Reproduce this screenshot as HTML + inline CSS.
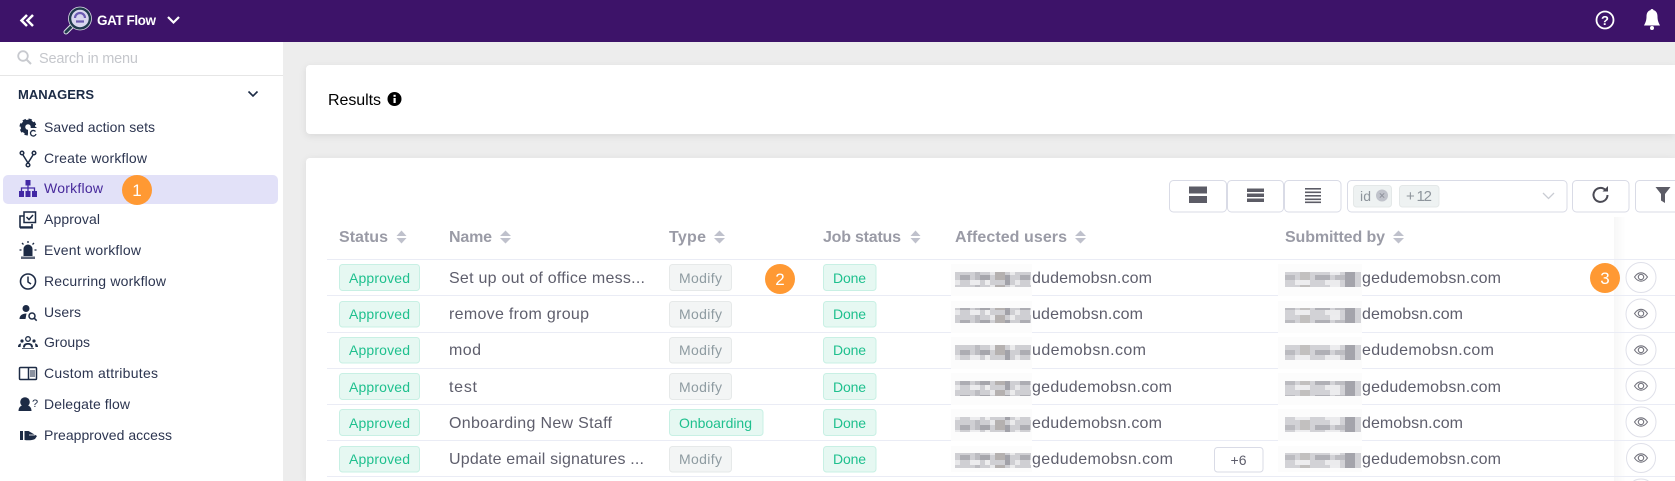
<!DOCTYPE html>
<html lang="en"><head><meta charset="utf-8"><title>GAT Flow</title>
<style>
html,body{margin:0;padding:0;width:1675px;height:481px;overflow:hidden;background:#ededed}
.b{position:absolute}
svg{position:absolute;left:0;top:0;display:block}
text{font-family:"Liberation Sans",sans-serif}
.si{font-size:14px;fill:#2c3550}
.h{font-size:16px;font-weight:bold;fill:#9a9ba6}
.t{font-size:16px;fill:#5e5e6c}
.ap{font-size:14px;fill:#1fc08e}
.mo{font-size:14px;fill:#8e9ba1}
.g{fill:#e6f8f2;stroke:#c8f0e4}
.m{fill:#f3f5f5;stroke:#e6e9e9}
.btn{fill:#fff;stroke:#d9dbe6}
.eye{fill:#fff;stroke:#dfe0e9}
.ln{stroke:#eaecf5;stroke-width:1}
.n{font-size:17px;fill:#fff;text-anchor:middle}
.ic{fill:#1d2b45}
.st{fill:none;stroke:#1d2b45}
.so{fill:#bfc1cc}
</style></head>
<body>
<div class="b" style="left:0;top:42px;width:283px;height:439px;background:#fff"></div>
<div class="b" style="left:306px;top:65px;width:1369px;height:69px;background:#fff;border-radius:4px 0 0 4px;box-shadow:0 2px 8px rgba(0,0,0,.09)"></div>
<div class="b" style="left:306px;top:158px;width:1369px;height:323px;background:#fff;border-radius:4px 0 0 0;box-shadow:0 1px 8px rgba(0,0,0,.07)"></div>
<svg width="1675" height="481" viewBox="0 0 1675 481" xmlns="http://www.w3.org/2000/svg">
<defs>
<pattern id="m1" width="60" height="15" patternUnits="userSpaceOnUse" x="955" y="0">
<rect width="60" height="15" fill="#cfcfd3"/>
<rect x="5" y="5" width="10" height="5" fill="#adadb3"/><rect x="20" y="0" width="5" height="10" fill="#bcbcc1"/>
<rect x="25" y="5" width="10" height="5" fill="#a6a6ac"/><rect x="40" y="0" width="10" height="10" fill="#b5b1b0"/>
<rect x="50" y="5" width="5" height="10" fill="#a2a2a9"/><rect x="0" y="10" width="5" height="5" fill="#e8e8ea"/>
<rect x="15" y="10" width="10" height="5" fill="#ececee"/><rect x="35" y="0" width="5" height="5" fill="#e8e8ea"/>
<rect x="55" y="0" width="5" height="5" fill="#ebebec"/><rect x="30" y="10" width="5" height="5" fill="#eeeeef"/>
</pattern>
<pattern id="m2" width="76" height="15" patternUnits="userSpaceOnUse" x="1285" y="0">
<rect width="76" height="15" fill="#d2d2d6"/>
<rect x="0" y="5" width="10" height="5" fill="#bbbbc0"/><rect x="15" y="0" width="10" height="10" fill="#c2c0bf"/>
<rect x="30" y="5" width="15" height="5" fill="#b0b0b6"/><rect x="50" y="5" width="10" height="5" fill="#bdbdc2"/>
<rect x="60" y="0" width="10" height="15" fill="#a4a4ab"/><rect x="10" y="10" width="15" height="5" fill="#ededef"/>
<rect x="40" y="10" width="15" height="5" fill="#ebebed"/><rect x="45" y="0" width="10" height="5" fill="#ececee"/>
</pattern>
<linearGradient id="sh" x1="0" x2="1"><stop offset="0" stop-color="#f7f7f7"/><stop offset="1" stop-color="#fff"/></linearGradient>
</defs>

<!-- top bar -->
<rect width="1675" height="42" fill="#3d1369"/>
<path d="M27 15l-5.500 5.500 5.500 5.500M33 15l-5.500 5.500 5.500 5.500" fill="none" stroke="#fff" stroke-width="2.500"/>
<path d="M72 26l-6 6" stroke="#dcdde6" stroke-width="5" stroke-linecap="round"/>
<path d="M72 26l-6 6" stroke="#1f3a4c" stroke-width="3" stroke-linecap="round"/>
<circle cx="80" cy="18.500" r="10" fill="#d8d6ee" stroke="#1f3a4c" stroke-width="2.500"/>
<circle cx="80" cy="18.500" r="11.500" fill="none" stroke="#dcdde6" stroke-width=".8"/>
<path d="M75 18a5 5 0 0 1 10 0M76 21.500h8" fill="none" stroke="#6a5ab0" stroke-width="2.200"/>
<text x="97" y="25" font-size="13.500" font-weight="bold" fill="#fff" textLength="59">GAT Flow</text>
<path d="M168 17l5.500 5.500 5.500-5.500" fill="none" stroke="#fff" stroke-width="2.200"/>
<circle cx="1605" cy="20" r="8.500" fill="none" stroke="#fff" stroke-width="1.800"/>
<text x="1605" y="25" font-size="13" font-weight="bold" fill="#fff" text-anchor="middle">?</text>
<path d="M1652 10c-4 0-5.500 3-5.500 6.500 0 4-1 6-2.500 9h16c-1.500-3-2.500-5-2.500-9 0-3.500-1.500-6.500-5.500-6.500z" fill="#fff"/>
<circle cx="1652" cy="28" r="2" fill="#fff"/><circle cx="1652" cy="10.500" r="1.500" fill="#fff"/>

<!-- sidebar -->
<circle cx="23" cy="56" r="4.800" fill="none" stroke="#c8cacf" stroke-width="1.800"/><path d="M26.500 59.500l4.500 4.500" stroke="#c8cacf" stroke-width="2"/>
<text x="39" y="63" font-size="14.500" fill="#c5c7cc" textLength="99">Search in menu</text>
<rect x="0" y="75" width="283" height="1" fill="#e6e6e6"/>
<text x="18" y="99" font-size="13" font-weight="bold" fill="#1c2b45" textLength="76">MANAGERS</text>
<path d="M248.500 91.500l4.500 4.500 4.500-4.500" fill="none" stroke="#1c2b45" stroke-width="1.600"/>
<rect x="3" y="175" width="275" height="29" rx="5" fill="#e2e1f8"/>

<!-- gear -->
<circle cx="28" cy="127" r="5" fill="none" stroke="#1d2b45" stroke-width="4.500"/>
<circle cx="28" cy="127" r="7.200" fill="none" stroke="#1d2b45" stroke-width="2.600" stroke-dasharray="3.200 2.500"/>
<rect x="28" y="128" width="9" height="9" fill="#fff"/>
<path d="M35.500 131.500a2.800 2.800 0 1 0 .5 2.500" fill="none" stroke="#1d2b45" stroke-width="1.300"/>
<!-- fork -->
<circle cx="22" cy="153" r="1.800" class="st" stroke-width="1.500"/><circle cx="34" cy="153" r="1.800" class="st" stroke-width="1.500"/><circle cx="28" cy="165" r="1.800" class="st" stroke-width="1.500"/>
<path d="M23 155l5 8M33 155l-5 8" class="st" stroke-width="1.500"/>
<!-- sitemap -->
<g fill="#4228a4"><rect x="25.500" y="180" width="5" height="5.500"/><rect x="19" y="191" width="5" height="6"/><rect x="25.500" y="191" width="5" height="6"/><rect x="32" y="191" width="5" height="6"/></g>
<path d="M28 185v6M21.500 191v-3h13v3" fill="none" stroke="#4228a4" stroke-width="1.300"/>
<!-- approval -->
<path d="M24 216h-4v11h12v-3" class="st" stroke-width="1.600"/><path d="M20 228h13" class="st" stroke-width="1.200"/>
<rect x="24" y="212" width="11.500" height="10.500" class="st" stroke-width="1.500"/>
<path d="M26.500 217l2.500 2.500 4-4.500" class="st" stroke-width="1.500"/>
<!-- siren -->
<path d="M23.500 256v-7a4.500 4.500 0 0 1 9 0v7z" class="ic"/><rect x="21" y="256.500" width="14" height="2.500" fill="#5b6478"/>
<path d="M19.500 250h2M34.500 250h2M22 243l1.500 1.500M34 243l-1.500 1.500M28 241v2" stroke="#1d2b45" stroke-width="1.300"/>
<!-- clock -->
<circle cx="28" cy="281.500" r="7.500" class="st" stroke-width="1.600"/><path d="M28 276.500v5.500l3 2" class="st" stroke-width="1.500"/>
<!-- users -->
<circle cx="26" cy="308.500" r="3.500" class="ic"/><path d="M19.500 319c0-3 2-5.500 7-5.500l-1 5.500z" class="ic"/>
<circle cx="32" cy="316" r="3" class="st" stroke-width="1.500"/><path d="M34.200 318.200l2.500 2.500" class="st" stroke-width="1.500"/>
<!-- groups -->
<circle cx="28" cy="339" r="2.300" class="st" stroke-width="1.300"/><circle cx="22" cy="341" r="1.600" class="ic"/><circle cx="34" cy="341" r="1.600" class="ic"/>
<path d="M23 347.500c0-3.500 2-4.500 5-4.500s5 1 5 4.500h-2c0-2-1-2.800-3-2.800s-3 .8-3 2.800zM18 347c0-2.500 1.500-3.500 3-3.500l-.5 3.500zM38 347c0-2.500-1.500-3.500-3-3.500l.5 3.500zM22 349h12v-.8H22z" class="ic"/>
<!-- book -->
<rect x="19.500" y="367.500" width="17" height="12" rx="1" class="st" stroke-width="1.500"/><path d="M28.500 367.500v12" class="st" stroke-width="1.500"/>
<rect x="30" y="370" width="5" height="7" fill="#8b92a0"/>
<!-- delegate -->
<circle cx="25" cy="402" r="4.800" class="ic"/><path d="M18.500 411c0-4 2.500-6 6.500-6s6.500 2 6.500 6z" class="ic"/>
<text x="32" y="407" font-size="11" fill="#1d2b45">?</text>
<!-- hand -->
<rect x="20" y="431" width="3" height="9" class="ic"/><path d="M24.500 431h4l8.500 5-2 3c-3 1.500-7 1.500-10.500 1z" class="ic"/><path d="M29 435h6" stroke="#fff" stroke-width=".8"/>

<text class="si" x="44" y="132" textLength="111">Saved action sets</text>
<text class="si" x="44" y="163" textLength="103">Create workflow</text>
<text class="si" x="44" y="193" textLength="59" style="fill:#47299b">Workflow</text>
<text class="si" x="44" y="224" textLength="56">Approval</text>
<text class="si" x="44" y="255" textLength="97">Event workflow</text>
<text class="si" x="44" y="286" textLength="122">Recurring workflow</text>
<text class="si" x="44" y="317" textLength="37">Users</text>
<text class="si" x="44" y="347" textLength="46">Groups</text>
<text class="si" x="44" y="378" textLength="114">Custom attributes</text>
<text class="si" x="44" y="409" textLength="86">Delegate flow</text>
<text class="si" x="44" y="440" textLength="128">Preapproved access</text>

<circle cx="137" cy="190" r="15" fill="#ff9933"/><text class="n" x="137" y="196">1</text>

<!-- results -->
<text x="328" y="105" font-size="16" fill="#000" textLength="53">Results</text>
<circle cx="394.500" cy="99" r="7" fill="#000"/><rect x="393.500" y="98" width="2.200" height="5" fill="#fff"/><rect x="393.500" y="94.800" width="2.200" height="2" fill="#fff"/>

<!-- toolbar -->
<rect class="btn" x="1169.500" y="180.500" width="57" height="31.500" rx="4"/>
<rect class="btn" x="1227.500" y="180.500" width="56" height="31.500" rx="4"/>
<rect class="btn" x="1284.500" y="180.500" width="56.500" height="31.500" rx="4"/>
<rect class="btn" x="1347.500" y="180.500" width="219.500" height="31.500" rx="4"/>
<rect class="btn" x="1572.500" y="180.500" width="56.500" height="31.500" rx="4"/>
<path class="btn" d="M1675 180.500H1639.500a4 4 0 0 0-4 4V208a4 4 0 0 0 4 4H1675"/>
<rect x="1189" y="186.500" width="18" height="7" fill="#5c5c66"/><rect x="1189" y="196" width="18" height="7" fill="#5c5c66"/>
<rect x="1247" y="188.500" width="17" height="3.500" fill="#5c5c66"/><rect x="1247" y="193.500" width="17" height="3.500" fill="#5c5c66"/><rect x="1247" y="198.500" width="17" height="3.500" fill="#5c5c66"/>
<g fill="#5c5c66"><rect x="1305" y="188" width="16" height="1.600"/><rect x="1305" y="191.500" width="16" height="1.600"/><rect x="1305" y="195" width="16" height="1.600"/><rect x="1305" y="198.500" width="16" height="1.600"/><rect x="1305" y="201.500" width="16" height="1.600"/></g>
<rect x="1353.500" y="185.500" width="38" height="21.500" rx="3" fill="#eef2f2" stroke="#e4e8e8"/>
<text x="1360" y="201" font-size="14" fill="#8e959c" textLength="11">id</text>
<circle cx="1382" cy="195.500" r="6" fill="#c0c3cb"/><path d="M1379.800 193.300l4.400 4.400M1384.200 193.300l-4.400 4.400" stroke="#8e929c" stroke-width="1"/>
<rect x="1399.500" y="185.500" width="39.500" height="21.500" rx="3" fill="#eef2f2" stroke="#e4e8e8"/>
<text x="1406" y="201" font-size="15" fill="#8e959c" textLength="26">+ 12</text>
<path d="M1543 193l5.500 5.500 5.500-5.500" fill="none" stroke="#c9ccd3" stroke-width="1.300"/>
<path d="M1607.500 195a7 7 0 1 1-2-5" fill="none" stroke="#4a4a54" stroke-width="2"/><path d="M1608 186v5.500h-5.500z" fill="#4a4a54"/>
<path d="M1655.500 187h15l-5.500 7v9l-4-2.500v-6.500z" fill="#5c5c66"/>

<!-- right col shadow -->
<rect x="1614" y="217" width="12" height="264" fill="url(#sh)"/>

<!-- table lines -->
<path class="ln" d="M327 259.500H1675M327 295.500H1675M327 332.500H1675M327 368.500H1675M327 404.500H1675M327 440.500H1675M327 476.500H1675"/>

<!-- headers -->
<text class="h" x="339" y="242" textLength="49">Status</text>
<text class="h" x="449" y="242" textLength="43">Name</text>
<text class="h" x="669" y="242" textLength="37">Type</text>
<text class="h" x="823" y="242" textLength="78">Job status</text>
<text class="h" x="955" y="242" textLength="112">Affected users</text>
<text class="h" x="1285" y="242" textLength="100">Submitted by</text>
<path class="so" d="M396.500 236l5-5.500 5 5.500zM396.500 238h10l-5 5.500zM500 236l5.500-5.500 5.500 5.500zM500 238h11l-5.500 5.500zM714 236l5.500-5.500 5.500 5.500zM714 238h11l-5.500 5.500zM910.500 236l5-5.500 5 5.500zM910.500 238h10l-5 5.500zM1075 236l5.500-5.500 5.500 5.500zM1075 238h11l-5.500 5.500zM1393 236l5.500-5.500 5.500 5.500zM1393 238h11l-5.500 5.500z"/>

<!-- badges -->
<g>
<rect class="g" x="339.500" y="264.500" width="80" height="26" rx="3"/>
<rect class="g" x="339.500" y="301.500" width="80" height="25.500" rx="3"/>
<rect class="g" x="339.500" y="337.500" width="80" height="25.500" rx="3"/>
<rect class="g" x="339.500" y="373.500" width="80" height="26" rx="3"/>
<rect class="g" x="339.500" y="409.500" width="80" height="26" rx="3"/>
<rect class="g" x="339.500" y="446.500" width="80" height="25.500" rx="3"/>
<rect class="m" x="669.500" y="264.500" width="62" height="26" rx="3"/>
<rect class="m" x="669.500" y="301.500" width="62" height="25.500" rx="3"/>
<rect class="m" x="669.500" y="337.500" width="62" height="25.500" rx="3"/>
<rect class="m" x="669.500" y="373.500" width="62" height="26" rx="3"/>
<rect class="g" x="669.500" y="409.500" width="93.500" height="26" rx="3"/>
<rect class="m" x="669.500" y="446.500" width="62" height="25.500" rx="3"/>
<rect class="g" x="823.500" y="264.500" width="52.500" height="26" rx="3"/>
<rect class="g" x="823.500" y="301.500" width="52.500" height="25.500" rx="3"/>
<rect class="g" x="823.500" y="337.500" width="52.500" height="25.500" rx="3"/>
<rect class="g" x="823.500" y="373.500" width="52.500" height="26" rx="3"/>
<rect class="g" x="823.500" y="409.500" width="52.500" height="26" rx="3"/>
<rect class="g" x="823.500" y="446.500" width="52.500" height="25.500" rx="3"/>
</g>
<g class="ap">
<text class="ap" x="349" y="283" textLength="61">Approved</text>
<text class="ap" x="349" y="319" textLength="61">Approved</text>
<text class="ap" x="349" y="355" textLength="61">Approved</text>
<text class="ap" x="349" y="392" textLength="61">Approved</text>
<text class="ap" x="349" y="428" textLength="61">Approved</text>
<text class="ap" x="349" y="464" textLength="61">Approved</text>
<text class="mo" x="679" y="283" textLength="43">Modify</text>
<text class="mo" x="679" y="319" textLength="43">Modify</text>
<text class="mo" x="679" y="355" textLength="43">Modify</text>
<text class="mo" x="679" y="392" textLength="43">Modify</text>
<text class="ap" x="679" y="428" textLength="73">Onboarding</text>
<text class="mo" x="679" y="464" textLength="43">Modify</text>
<text class="ap" x="833" y="283" textLength="33">Done</text>
<text class="ap" x="833" y="319" textLength="33">Done</text>
<text class="ap" x="833" y="355" textLength="33">Done</text>
<text class="ap" x="833" y="392" textLength="33">Done</text>
<text class="ap" x="833" y="428" textLength="33">Done</text>
<text class="ap" x="833" y="464" textLength="33">Done</text>
</g>

<!-- names -->
<text class="t" x="449" y="283" textLength="196">Set up out of office mess...</text>
<text class="t" x="449" y="319" textLength="140">remove from group</text>
<text class="t" x="449" y="355" textLength="32">mod</text>
<text class="t" x="449" y="392" textLength="28">test</text>
<text class="t" x="449" y="428" textLength="163">Onboarding New Staff</text>
<text class="t" x="449" y="464" textLength="195">Update email signatures ...</text>

<!-- blur patches -->
<g fill="#fcfcfc">
<rect x="951" y="264" width="81" height="32"/><rect x="951" y="301" width="81" height="32"/><rect x="951" y="337" width="81" height="32"/><rect x="951" y="373" width="81" height="32"/><rect x="951" y="409" width="81" height="32"/><rect x="951" y="446" width="81" height="26"/>
<rect x="1278" y="264" width="84" height="32"/><rect x="1278" y="301" width="84" height="32"/><rect x="1278" y="337" width="84" height="32"/><rect x="1278" y="373" width="84" height="32"/><rect x="1278" y="409" width="84" height="32"/><rect x="1278" y="446" width="84" height="26"/>
</g>
<g fill="url(#m1)">
<rect x="955" y="272" width="76" height="15"/><rect x="955" y="308" width="76" height="15"/><rect x="955" y="345" width="76" height="15"/><rect x="955" y="381" width="76" height="15"/><rect x="955" y="417" width="76" height="15"/><rect x="955" y="453" width="76" height="15"/>
</g>
<g fill="url(#m2)">
<rect x="1285" y="272" width="76" height="15"/><rect x="1285" y="308" width="76" height="15"/><rect x="1285" y="345" width="76" height="15"/><rect x="1285" y="381" width="76" height="15"/><rect x="1285" y="417" width="76" height="15"/><rect x="1285" y="453" width="76" height="15"/>
</g>

<!-- emails -->
<text class="t" x="1032" y="283" textLength="120">dudemobsn.com</text>
<text class="t" x="1032" y="319" textLength="111">udemobsn.com</text>
<text class="t" x="1032" y="355" textLength="114">udemobsn.com</text>
<text class="t" x="1032" y="392" textLength="140">gedudemobsn.com</text>
<text class="t" x="1032" y="428" textLength="130">edudemobsn.com</text>
<text class="t" x="1032" y="464" textLength="141">gedudemobsn.com</text>
<rect class="btn" x="1214.500" y="447.500" width="48.500" height="24.500" rx="3"/>
<text x="1238.500" y="465" font-size="14" fill="#5e5e6c" text-anchor="middle">+6</text>
<text class="t" x="1362" y="283" textLength="139">gedudemobsn.com</text>
<text class="t" x="1362" y="319" textLength="101">demobsn.com</text>
<text class="t" x="1362" y="355" textLength="132">edudemobsn.com</text>
<text class="t" x="1362" y="392" textLength="139">gedudemobsn.com</text>
<text class="t" x="1362" y="428" textLength="101">demobsn.com</text>
<text class="t" x="1362" y="464" textLength="139">gedudemobsn.com</text>

<!-- eyes -->
<g>
<circle class="eye" cx="1641" cy="277.500" r="15"/><circle class="eye" cx="1641" cy="314" r="15"/><circle class="eye" cx="1641" cy="350" r="15"/><circle class="eye" cx="1641" cy="386" r="15"/><circle class="eye" cx="1641" cy="422" r="15"/><circle class="eye" cx="1641" cy="458" r="14.500"/>
<path class="eye" d="M1633.500 481a15 15 0 0 1 15 0"/>
</g>
<g fill="none" stroke="#73737d" stroke-width="1.100">
<path d="M1634.500 277c2-3 4-4.200 6.500-4.200s4.500 1.200 6.500 4.200c-2 3-4 4.200-6.500 4.200s-4.500-1.200-6.500-4.200z"/><circle cx="1641" cy="277" r="2.700"/>
<path d="M1634.500 313.500c2-3 4-4.200 6.500-4.200s4.500 1.200 6.500 4.200c-2 3-4 4.200-6.500 4.200s-4.500-1.200-6.500-4.200z"/><circle cx="1641" cy="313.500" r="2.700"/>
<path d="M1634.500 350c2-3 4-4.200 6.500-4.200s4.500 1.200 6.500 4.200c-2 3-4 4.200-6.500 4.200s-4.500-1.200-6.500-4.200z"/><circle cx="1641" cy="350" r="2.700"/>
<path d="M1634.500 386c2-3 4-4.200 6.500-4.200s4.500 1.200 6.500 4.200c-2 3-4 4.200-6.500 4.200s-4.500-1.200-6.500-4.200z"/><circle cx="1641" cy="386" r="2.700"/>
<path d="M1634.500 422c2-3 4-4.200 6.500-4.200s4.500 1.200 6.500 4.200c-2 3-4 4.200-6.500 4.200s-4.500-1.200-6.500-4.200z"/><circle cx="1641" cy="422" r="2.700"/>
<path d="M1634.500 458c2-3 4-4.200 6.500-4.200s4.500 1.200 6.500 4.200c-2 3-4 4.200-6.500 4.200s-4.500-1.200-6.500-4.200z"/><circle cx="1641" cy="458" r="2.700"/>
</g>

<circle cx="780" cy="279" r="15" fill="#ff9933"/><text class="n" x="780" y="285">2</text>
<circle cx="1605" cy="278" r="15" fill="#ff9933"/><text class="n" x="1605" y="284">3</text>
</svg>
</body></html>
